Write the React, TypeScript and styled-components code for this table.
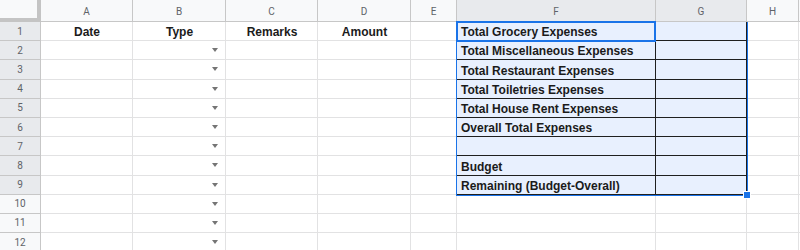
import { ReactElement } from 'react';
import styled, { createGlobalStyle } from 'styled-components';

const Colors = {
    headerBg: '#f8f9fa',
    headerSelectedBg: '#e8eaed',
    headerLine: '#c7c7c7',
    headerText: '#5f6368',
    gridLine: '#e2e2e3',
    blockFill: '#e8f0fe',
    blockLine: '#1f1f1f',
    selection: '#1a73e8',
    text: '#1b1b1b',
    arrow: '#757575',
};

const COLUMNS = ['A', 'B', 'C', 'D', 'E', 'F', 'G', 'H'];
const ROW_COUNT = 12;
const ROW_HEIGHT = 19.2;

// F1:G9 is the summary block
const isBlock = (row: number, col: number) => row <= 9 && (col === 5 || col === 6);

const headings: Record<number, string> = { 0: 'Date', 1: 'Type', 2: 'Remarks', 3: 'Amount' };

const summary = [
    'Total Grocery Expenses',
    'Total Miscellaneous Expenses',
    'Total Restaurant Expenses',
    'Total Toiletries Expenses',
    'Total House Rent Expenses',
    'Overall Total Expenses',
    '',
    'Budget',
    'Remaining (Budget-Overall)',
];

const GlobalStyle = createGlobalStyle`
    html, body {
        margin: 0;
        background: #ffffff;
        overflow: hidden;
    }
    body {
        font-family: "Liberation Sans", Arial, sans-serif;
    }
`;

const Sheet = styled.div`
    display: grid;
    grid-template-columns: 41px 92px 93px 92px 93px 46px 199px 91px 52px 1fr;
    grid-template-rows: 22px repeat(${ROW_COUNT}, ${ROW_HEIGHT}px);
    width: 800px;
    height: 250px;
    overflow: hidden;
`;

const Corner = styled.div`
    grid-row: 1;
    grid-column: 1;
    box-sizing: border-box;
    background: ${Colors.headerBg};
    border-right: 4px solid #c4c4c4;
    border-bottom: 4px solid #c4c4c4;
`;

const ColHeader = styled.div<{ $col: number; $selected: boolean }>`
    grid-row: 1;
    grid-column: ${({ $col }) => $col + 2};
    box-sizing: border-box;
    display: flex;
    align-items: center;
    justify-content: center;
    padding-top: 1px;
    background: ${({ $selected }) => ($selected ? Colors.headerSelectedBg : Colors.headerBg)};
    border-right: 1px solid ${Colors.headerLine};
    border-bottom: 1px solid ${Colors.headerLine};
    color: ${Colors.headerText};
    font-family: Roboto, "Liberation Sans", sans-serif;
    font-size: 10px;
`;

const RowHeader = styled.div<{ $row: number; $selected: boolean }>`
    grid-row: ${({ $row }) => $row + 1};
    grid-column: 1;
    box-sizing: border-box;
    display: flex;
    align-items: center;
    justify-content: center;
    background: ${({ $selected }) => ($selected ? Colors.headerSelectedBg : Colors.headerBg)};
    border-right: 1px solid ${Colors.headerLine};
    border-bottom: 1px solid ${Colors.headerLine};
    color: ${Colors.headerText};
    font-family: Roboto, "Liberation Sans", sans-serif;
    font-size: 10px;
`;

const Cell = styled.div<{ $row: number; $col: number; $block: boolean; $center?: boolean }>`
    grid-row: ${({ $row }) => $row + 1};
    grid-column: ${({ $col }) => $col + 2};
    position: relative;
    box-sizing: border-box;
    display: flex;
    align-items: flex-end;
    justify-content: ${({ $center }) => ($center ? 'center' : 'flex-start')};
    padding: 0 3px 0 4px;
    min-width: 0;
    overflow: visible;
    white-space: nowrap;
    background: ${({ $block }) => ($block ? Colors.blockFill : '#ffffff')};
    border-right: 1px solid ${({ $block }) => ($block ? Colors.blockLine : Colors.gridLine)};
    border-bottom: 1px solid ${({ $block }) => ($block ? Colors.blockLine : Colors.gridLine)};
    color: ${Colors.text};
    font-size: 12px;
    font-weight: bold;
    line-height: 15px;
`;

const DropArrow = styled.span`
    position: absolute;
    right: 7px;
    top: 50%;
    margin-top: -2px;
    width: 0;
    height: 0;
    border-left: 3.5px solid transparent;
    border-right: 3.5px solid transparent;
    border-top: 4px solid ${Colors.arrow};
`;

const Selection = styled.div`
    grid-row: 2 / 11;
    grid-column: 7 / 9;
    position: relative;
    box-sizing: border-box;
    margin: 0 -1px -1px -1px;
    border: 1px solid ${Colors.selection};
    border-top: none;
    pointer-events: none;
    z-index: 2;
`;

const ActiveCell = styled.div`
    grid-row: 2;
    grid-column: 7;
    box-sizing: border-box;
    margin: -1px 0 -1px -1px;
    border: 2px solid ${Colors.selection};
    pointer-events: none;
    z-index: 3;
`;

const FillHandle = styled.span`
    position: absolute;
    right: -4px;
    bottom: -4px;
    width: 6px;
    height: 6px;
    background: ${Colors.selection};
    border: 1px solid #ffffff;
`;

const App = (): ReactElement => {
    const rows = Array.from({ length: ROW_COUNT }, (_, i) => i + 1);
    return (
        <>
            <GlobalStyle />
            <Sheet>
                <Corner />
                {COLUMNS.map((letter, c) => (
                    <ColHeader key={letter} $col={c} $selected={c === 5 || c === 6}>
                        {letter}
                    </ColHeader>
                ))}
                <ColHeader $col={8} $selected={false} />
                {rows.map((row) => (
                    <RowHeader key={`rh${row}`} $row={row} $selected={row <= 9}>
                        {row}
                    </RowHeader>
                ))}
                {rows.map((row) =>
                    [...COLUMNS, ''].map((_, c) => {
                        const block = isBlock(row, c);
                        let content: string | null = null;
                        if (row === 1 && headings[c]) content = headings[c];
                        if (c === 5 && row <= 9) content = summary[row - 1];
                        return (
                            <Cell
                                key={`${row}-${c}`}
                                $row={row}
                                $col={c}
                                $block={block}
                                $center={row === 1 && c < 4}
                            >
                                {content}
                                {c === 1 && row > 1 && <DropArrow />}
                            </Cell>
                        );
                    }),
                )}
                <Selection>
                    <FillHandle />
                </Selection>
                <ActiveCell />
            </Sheet>
        </>
    );
};

export default App;
